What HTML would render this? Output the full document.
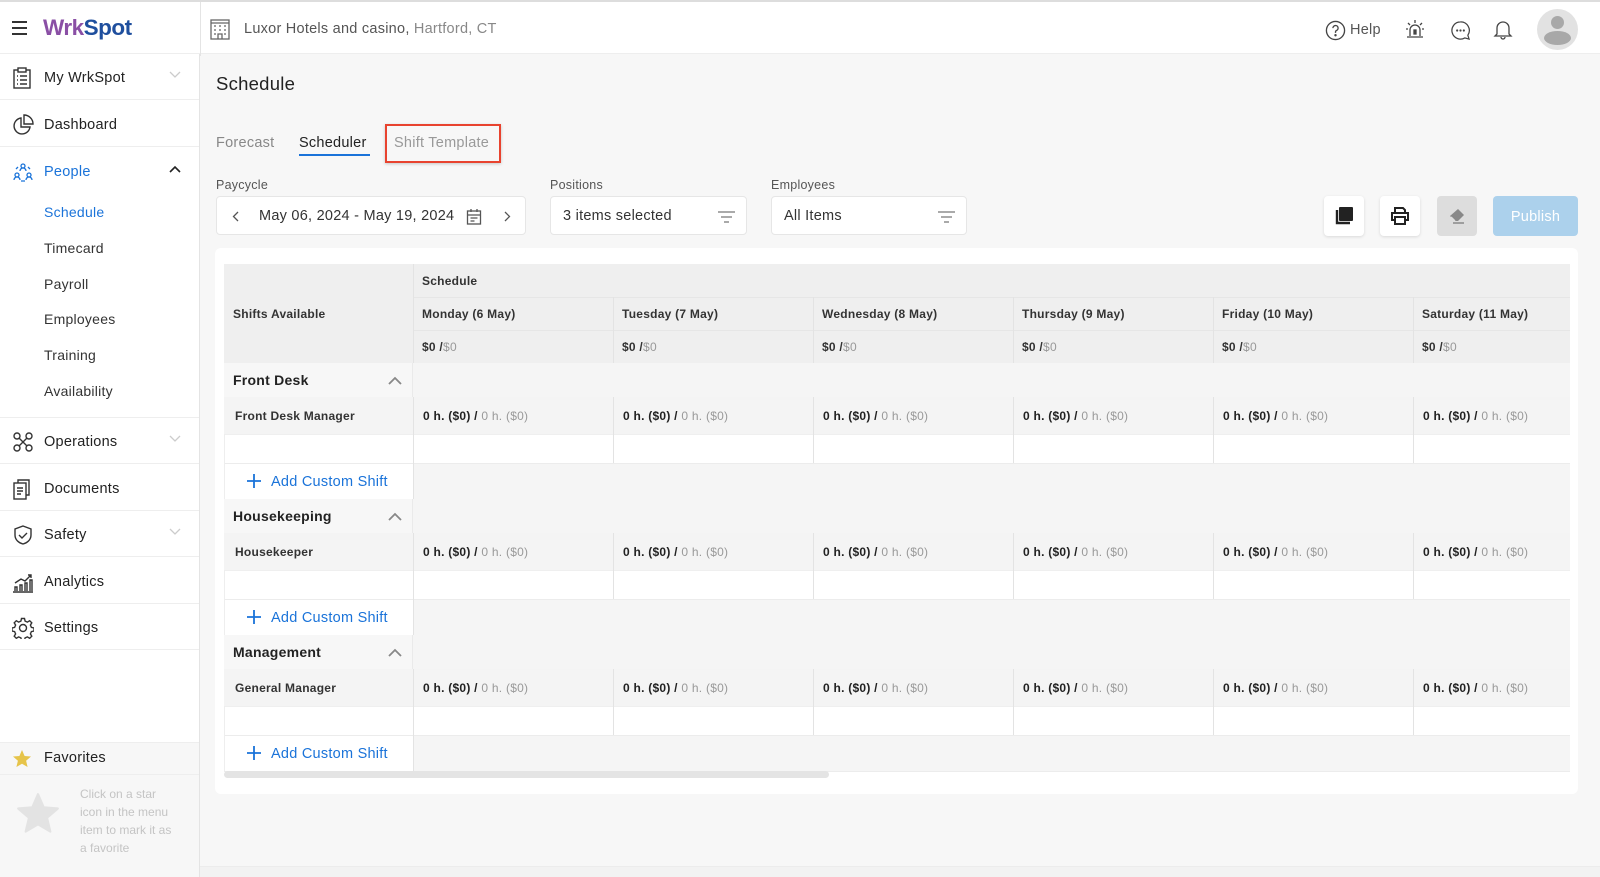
<!DOCTYPE html>
<html><head><meta charset="utf-8"><style>
*{box-sizing:border-box;margin:0;padding:0}
body{width:1600px;height:877px;overflow:hidden;background:#f7f7f7;font-family:"Liberation Sans",sans-serif;color:#222;position:relative;letter-spacing:0.25px}
.abs{position:absolute}
#top{left:0;top:0;width:1600px;height:54px;background:#fff;border-top:2px solid #ddd;border-bottom:1px solid #eee}
#side{left:0;top:54px;width:200px;height:823px;background:#fff;border-right:1px solid #e4e4e4}
.it{position:absolute;left:0;width:199px;height:46px;border-bottom:1px solid #eee;font-size:14.5px;display:flex;align-items:center;padding-left:44px;padding-top:2px}
.it svg.ic{position:absolute;left:12px;top:13px}
.chev{position:absolute;right:18px;top:17px}
.sub{position:absolute;left:44px;font-size:14px;color:#333}
.lbl{font-size:12.5px;color:#555}
.box{background:#fff;border:1px solid #e6e6e6;border-radius:4px;height:39px;font-size:14px;display:flex;align-items:center}
.btn{background:#fff;border-radius:4px;width:40px;height:40px;box-shadow:0 1px 3px rgba(0,0,0,.12);display:flex;align-items:center;justify-content:center}
.cell{position:absolute;font-size:12px;display:flex;align-items:center}
.g{color:#999}
.hl{position:absolute;height:1px;background:#e6e6e6}
.vl{position:absolute;width:1px;background:#e3e3e3}
</style></head><body>
<div id="top" class="abs">
  <div class="abs" style="left:12px;top:19px;width:15px;height:2px;background:#333;box-shadow:0 6px 0 #333,0 12px 0 #333"></div>
  <div class="abs" style="left:43px;top:13px;font-size:22.5px;font-weight:bold;letter-spacing:-0.5px"><span style="color:#8a4fa5">Wrk</span><span style="color:#1f4f9e">Spot</span></div>
  <div class="abs" style="left:200px;top:0;width:1px;height:54px;background:#e4e4e4"></div>
  <svg class="abs" style="left:208px;top:15px" width="24" height="24" viewBox="0 0 24 24" fill="none" stroke="#666" stroke-width="1.3"><rect x="3" y="3" width="18" height="19"/><path d="M3 6h18M6 9h2M11 9h2M16 9h2M6 13h2M11 13h2M16 13h2M6 17h2M16 17h2M10 22v-5h4v5"/></svg>
  <div class="abs" style="left:244px;top:19px;font-size:14.5px;color:#555">Luxor Hotels and casino, <span style="color:#888">Hartford, CT</span></div>
  <svg class="abs" style="left:1325px;top:18px" width="21" height="21" viewBox="0 0 22 22" fill="none" stroke="#444" stroke-width="1.4"><circle cx="11" cy="11" r="9.5"/><path d="M8.3 8.5a2.7 2.7 0 1 1 3.7 2.5c-.7.3-1 .8-1 1.5v1"/><circle cx="11" cy="16" r=".6" fill="#444"/></svg>
  <div class="abs" style="left:1350px;top:20px;font-size:14.5px;color:#555">Help</div>
  <svg class="abs" style="left:1404px;top:16px" width="22" height="22" viewBox="0 0 22 22" fill="none" stroke="#444" stroke-width="1.3"><path d="M6 18v-6a5 5 0 0 1 10 0v6M3 19h16M11 2v3M4 5l2 2M18 5l-2 2M2 11h2M18 11h2"/><rect x="10" y="12" width="2" height="4" fill="#444"/></svg>
  <svg class="abs" style="left:1450px;top:18px" width="21" height="21" viewBox="0 0 22 22" fill="none" stroke="#444" stroke-width="1.3"><path d="M11 2a9 9 0 1 0 4.5 16.8L20 20l-1.3-4A9 9 0 0 0 11 2z"/><circle cx="7.5" cy="11" r=".5" fill="#444"/><circle cx="11" cy="11" r=".5" fill="#444"/><circle cx="14.5" cy="11" r=".5" fill="#444"/></svg>
  <svg class="abs" style="left:1492px;top:16px" width="22" height="22" viewBox="0 0 22 22" fill="none" stroke="#444" stroke-width="1.3"><path d="M5 16V10a6 6 0 0 1 12 0v6l2 2H3z M9 19a2 2 0 0 0 4 0"/></svg>
  <div class="abs" style="left:1537px;top:7px;width:41px;height:41px;border-radius:50%;background:#e2e2e2;overflow:hidden">
    <div class="abs" style="left:14px;top:7px;width:13px;height:13px;border-radius:50%;background:#a8a8a8"></div>
    <div class="abs" style="left:7px;top:22px;width:27px;height:14px;border-radius:50%;background:#a8a8a8"></div>
  </div>
</div>

<div id="side" class="abs">
  <div class="it" style="top:0">My WrkSpot
    <svg class="ic" width="20" height="22" viewBox="0 0 20 22" fill="none" stroke="#333" stroke-width="1.4"><rect x="2" y="3" width="16" height="18"/><rect x="6" y="1" width="8" height="4" fill="#fff"/><path d="M5 9h1M8 9h7M5 13h1M8 13h7M5 17h1M8 17h7"/></svg>
    <svg class="chev" width="12" height="8" viewBox="0 0 12 8" fill="none" stroke="#ccc" stroke-width="1.3"><path d="M1 1l5 5 5-5"/></svg></div>
  <div class="it" style="top:47px">Dashboard
    <svg class="ic" width="22" height="22" viewBox="0 0 22 22" fill="none" stroke="#333" stroke-width="1.4"><path d="M9 4a8 8 0 1 0 9 9H9z"/><path d="M12 1v9h9a9 9 0 0 0-9-9z"/></svg></div>
  <div class="it" style="top:94px;color:#1a73d9;border-bottom:none">People
    <svg class="ic" width="22" height="22" viewBox="0 0 22 22" fill="none" stroke="#1a73d9" stroke-width="1.3"><circle cx="11" cy="5" r="2"/><path d="M8 10a3 3 0 0 1 6 0"/><circle cx="5" cy="14" r="2"/><path d="M2 19a3 3 0 0 1 6 0"/><circle cx="17" cy="14" r="2"/><path d="M14 19a3 3 0 0 1 6 0M4 8l2-2M18 8l-2-2M9 20h4"/></svg>
    <svg class="chev" width="12" height="8" viewBox="0 0 12 8" fill="none" stroke="#222" stroke-width="1.6"><path d="M1 7l5-5 5 5"/></svg></div>
  <div class="sub" style="top:150px;color:#1a73d9">Schedule</div>
  <div class="sub" style="top:186px">Timecard</div>
  <div class="sub" style="top:222px">Payroll</div>
  <div class="sub" style="top:257px">Employees</div>
  <div class="sub" style="top:293px">Training</div>
  <div class="sub" style="top:329px">Availability</div>
  <div class="hl" style="left:0;top:363px;width:199px;background:#eee"></div>
  <div class="it" style="top:364px">Operations
    <svg class="ic" width="22" height="22" viewBox="0 0 22 22" fill="none" stroke="#333" stroke-width="1.4"><circle cx="5" cy="5" r="3"/><circle cx="17" cy="5" r="3"/><circle cx="5" cy="17" r="3"/><circle cx="17" cy="17" r="3"/><path d="M7 7l8 8M15 7l-8 8"/></svg>
    <svg class="chev" width="12" height="8" viewBox="0 0 12 8" fill="none" stroke="#ccc" stroke-width="1.3"><path d="M1 1l5 5 5-5"/></svg></div>
  <div class="it" style="top:411px">Documents
    <svg class="ic" width="20" height="22" viewBox="0 0 20 22" fill="none" stroke="#333" stroke-width="1.4"><rect x="2" y="5" width="12" height="16"/><path d="M6 5V2h11v15h-3M5 10h6M5 13h6M5 16h4"/></svg></div>
  <div class="it" style="top:457px">Safety
    <svg class="ic" width="22" height="22" viewBox="0 0 22 22" fill="none" stroke="#333" stroke-width="1.4"><path d="M11 2l8 3v6c0 5-4 8-8 9-4-1-8-4-8-9V5z"/><path d="M7 11l3 3 5-5"/></svg>
    <svg class="chev" width="12" height="8" viewBox="0 0 12 8" fill="none" stroke="#ccc" stroke-width="1.3"><path d="M1 1l5 5 5-5"/></svg></div>
  <div class="it" style="top:504px">Analytics
    <svg class="ic" width="22" height="22" viewBox="0 0 22 22" fill="none" stroke="#333" stroke-width="1.4"><path d="M1 21h20M3 20v-4h2v4M8 20v-6h2v6M13 20v-8h2v8M18 20V9h2v11M3 12l6-4 4 2 6-6M16 4h3v3"/></svg></div>
  <div class="it" style="top:550px">Settings
    <svg class="ic" width="22" height="22" viewBox="0 0 22 22" fill="none" stroke="#333" stroke-width="1.4"><circle cx="11" cy="11" r="3.5"/><path d="M9.5 1.5h3l.6 2.6 2.3 1 2.3-1.4 2.1 2.1-1.4 2.3 1 2.3 2.6.6v3l-2.6.6-1 2.3 1.4 2.3-2.1 2.1-2.3-1.4-2.3 1-.6 2.6h-3l-.6-2.6-2.3-1-2.3 1.4-2.1-2.1 1.4-2.3-1-2.3-2.6-.6v-3l2.6-.6 1-2.3-1.4-2.3 2.1-2.1 2.3 1.4 2.3-1z"/></svg></div>
  <div class="abs" style="left:0;top:688px;width:199px;height:135px;background:#f7f7f7;border-top:1px solid #eee"></div>
  <div class="abs" style="left:0;top:688px;width:199px;height:33px;border-bottom:1px solid #eee;font-size:14.5px;padding:8px 0 0 44px">Favorites</div>
  <svg class="abs" style="left:12px;top:695px" width="20" height="20" viewBox="0 0 20 20"><path d="M10 1l2.6 6 6.4.5-4.9 4.2 1.5 6.3L10 14.7 4.4 18l1.5-6.3L1 7.5 7.4 7z" fill="#e6c44a"/></svg>
  <svg class="abs" style="left:16px;top:738px" width="44" height="44" viewBox="0 0 20 20"><path d="M10 1l2.6 6 6.4.5-4.9 4.2 1.5 6.3L10 14.7 4.4 18l1.5-6.3L1 7.5 7.4 7z" fill="#e3e3e3" stroke="#e3e3e3" stroke-linejoin="round"/></svg>
  <div class="abs" style="left:80px;top:731px;width:96px;font-size:12px;line-height:18px;color:#c4c4c4;letter-spacing:0">Click on a star icon in the menu item to mark it as a favorite</div>
</div>

<div class="abs" style="left:216px;top:73px;font-size:18.5px;color:#222">Schedule</div>
<div class="abs" style="left:216px;top:135px;font-size:14.5px;color:#888">Forecast</div>
<div class="abs" style="left:299px;top:135px;font-size:14.5px;color:#222">Scheduler</div>
<div class="abs" style="left:299px;top:154px;width:71px;height:2px;background:#1a73d9"></div>
<div class="abs" style="left:385px;top:124px;width:116px;height:39px;border:2px solid #e8432f;box-shadow:0 1px 3px rgba(0,0,0,.2)"></div>
<div class="abs" style="left:394px;top:135px;font-size:14.5px;color:#999">Shift Template</div>

<div class="abs lbl" style="left:216px;top:178px">Paycycle</div>
<div class="abs lbl" style="left:550px;top:178px">Positions</div>
<div class="abs lbl" style="left:771px;top:178px">Employees</div>
<div class="abs box" style="left:216px;top:196px;width:310px">
  <svg class="abs" style="left:15px;top:14px" width="7" height="11" viewBox="0 0 7 11" fill="none" stroke="#555" stroke-width="1.3"><path d="M6 1L1.5 5.5 6 10"/></svg>
  <span class="abs" style="left:42px;top:11px;color:#333;font-size:14.5px">May 06, 2024 - May 19, 2024</span>
  <svg class="abs" style="left:249px;top:11px" width="16" height="17" viewBox="0 0 16 17" fill="none" stroke="#555" stroke-width="1.3"><rect x="1.5" y="3" width="13" height="13"/><path d="M1.5 7h13M5 1v3M11 1v3M4.5 10h7M4.5 13h4"/></svg>
  <svg class="abs" style="left:287px;top:14px" width="7" height="11" viewBox="0 0 7 11" fill="none" stroke="#555" stroke-width="1.3"><path d="M1 1l4.5 4.5L1 10"/></svg>
</div>
<div class="abs box" style="left:550px;top:196px;width:197px;padding-left:12px;color:#333;font-size:14.5px">3 items selected
  <svg class="abs" style="left:167px;top:14px" width="17" height="12" viewBox="0 0 17 12" stroke="#777" stroke-width="1.3"><path d="M0 1h17M3 6h11M6 11h5"/></svg></div>
<div class="abs box" style="left:771px;top:196px;width:196px;padding-left:12px;color:#333;font-size:14.5px">All Items
  <svg class="abs" style="left:166px;top:14px" width="17" height="12" viewBox="0 0 17 12" stroke="#777" stroke-width="1.3"><path d="M0 1h17M3 6h11M6 11h5"/></svg></div>

<div class="abs btn" style="left:1324px;top:196px"><svg width="20" height="20" viewBox="0 0 20 20"><rect x="5" y="1" width="14" height="14" rx="1" fill="#222"/><path d="M3 4v13h13" fill="none" stroke="#222" stroke-width="2.4"/></svg></div>
<div class="abs btn" style="left:1380px;top:196px"><svg width="20" height="20" viewBox="0 0 20 20" fill="none" stroke="#222" stroke-width="2"><path d="M5 6V2h8l2 2v2M5 14H2V7h16v7h-3M5 11h10v7H5z"/></svg></div>
<div class="abs btn" style="left:1437px;top:196px;background:#ddd;box-shadow:none"><svg width="20" height="20" viewBox="0 0 20 20"><path d="M11 3l6 6-6 6H8L3 10z" fill="#888"/><path d="M6 17h11" stroke="#888" stroke-width="1.5"/><path d="M4 11l4 4" stroke="#ddd" stroke-width="1.5"/></svg></div>
<div class="abs" style="left:1493px;top:196px;width:85px;height:40px;background:#acd1ec;border-radius:4px;color:#fff;font-size:14.5px;display:flex;align-items:center;justify-content:center;padding-top:2px">Publish</div>

<div class="abs" style="left:215px;top:248px;width:1363px;height:546px;background:#fff;border-radius:6px"></div>

<div class="abs" style="left:224px;top:264px;width:1346px;height:99px;background:#efefef"></div>
<div class="hl" style="left:413px;top:297px;width:1157px"></div>
<div class="hl" style="left:413px;top:330px;width:1157px"></div>
<div class="hl" style="left:224px;top:363px;width:1346px"></div>
<div class="vl" style="left:413px;top:264px;height:99px"></div>
<div class="cell" style="left:422px;top:264px;height:33px;font-weight:bold;color:#333">Schedule</div>
<div class="cell" style="left:233px;top:264px;height:99px;font-weight:bold;color:#333">Shifts Available</div>

<div id="days"></div>
<div class="abs" style="left:224px;top:771px;width:605px;height:7px;background:#e4e4e4;border-radius:4px"></div>

<script>
var days=["Monday (6 May)","Tuesday (7 May)","Wednesday (8 May)","Thursday (9 May)","Friday (10 May)","Saturday (11 May)"];
var h="";
for(var i=0;i<6;i++){var x=413+i*200;
 if(i>0)h+='<div class="vl" style="left:'+x+'px;top:297px;height:66px"></div>';
 h+='<div class="cell" style="left:'+(x+9)+'px;top:297px;height:33px;font-weight:bold;color:#333">'+days[i]+'</div>';
 h+='<div class="cell" style="left:'+(x+9)+'px;top:330px;height:33px;font-weight:bold;color:#333">$0 /<span class="g" style="font-weight:normal">$0</span></div>';
}
var groups=[["Front Desk","Front Desk Manager"],["Housekeeping","Housekeeper"],["Management","General Manager"]];
for(var g=0;g<3;g++){var y=363+g*136;
 h+='<div class="abs" style="left:224px;top:'+y+'px;width:1346px;height:34px;background:#f5f5f5"></div>';
 h+='<div class="abs" style="left:224px;top:'+y+'px;width:189px;height:34px;background:#f7f7f7;border-right:1px solid #eaeaea"></div>';
 h+='<div class="cell" style="left:233px;top:'+y+'px;height:34px;font-size:14px;font-weight:bold;color:#222">'+groups[g][0]+'</div>';
 h+='<svg class="abs" style="left:388px;top:'+(y+13)+'px" width="14" height="9" viewBox="0 0 14 9" fill="none" stroke="#888" stroke-width="1.8"><path d="M1 8l6-6 6 6"/></svg>';
 h+='<div class="hl" style="left:224px;top:'+(y+34)+'px;width:1346px"></div>';
 h+='<div class="abs" style="left:224px;top:'+(y+34)+'px;width:1346px;height:37px;background:#f4f4f4"></div>';
 h+='<div class="cell" style="left:235px;top:'+(y+34)+'px;height:37px;font-weight:bold;color:#333">'+groups[g][1]+'</div>';
 h+='<div class="hl" style="left:224px;top:'+(y+71)+'px;width:1346px;background:#efefef"></div>';
 for(var i=0;i<6;i++){var x=413+i*200;
  h+='<div class="vl" style="left:'+x+'px;top:'+(y+34)+'px;height:66px"></div>';
  h+='<div class="cell" style="left:'+(x+10)+'px;top:'+(y+34)+'px;height:37px;color:#222;font-weight:bold">0 h. ($0) /&nbsp;<span class="g" style="font-weight:normal">0 h. ($0)</span></div>';
 }
 h+='<div class="hl" style="left:224px;top:'+(y+100)+'px;width:1346px;background:#ececec"></div>';
 h+='<div class="abs" style="left:413px;top:'+(y+101)+'px;width:1157px;height:35px;background:#f5f5f5"></div>';
 h+='<div class="vl" style="left:413px;top:'+(y+100)+'px;height:36px"></div>';
 h+='<div class="vl" style="left:224px;top:'+(y+71)+'px;height:65px;background:#eee"></div>';
 h+='<svg class="abs" style="left:247px;top:'+(y+111)+'px" width="14" height="14" viewBox="0 0 14 14" stroke="#1a73d9" stroke-width="1.8"><path d="M7 0v14M0 7h14"/></svg>';
 h+='<div class="cell" style="left:271px;top:'+(y+101)+'px;height:36px;font-size:14.5px;color:#1a73d9">Add Custom Shift</div>';
 h+='<div class="hl" style="left:224px;top:'+(y+136)+'px;width:1346px;background:#ececec"></div>';
}
document.getElementById("days").innerHTML=h;
</script>
<div class="abs" style="left:200px;top:866px;width:1400px;height:11px;background:#f2f2f2;border-top:1px solid #ececec"></div>
</body></html>
